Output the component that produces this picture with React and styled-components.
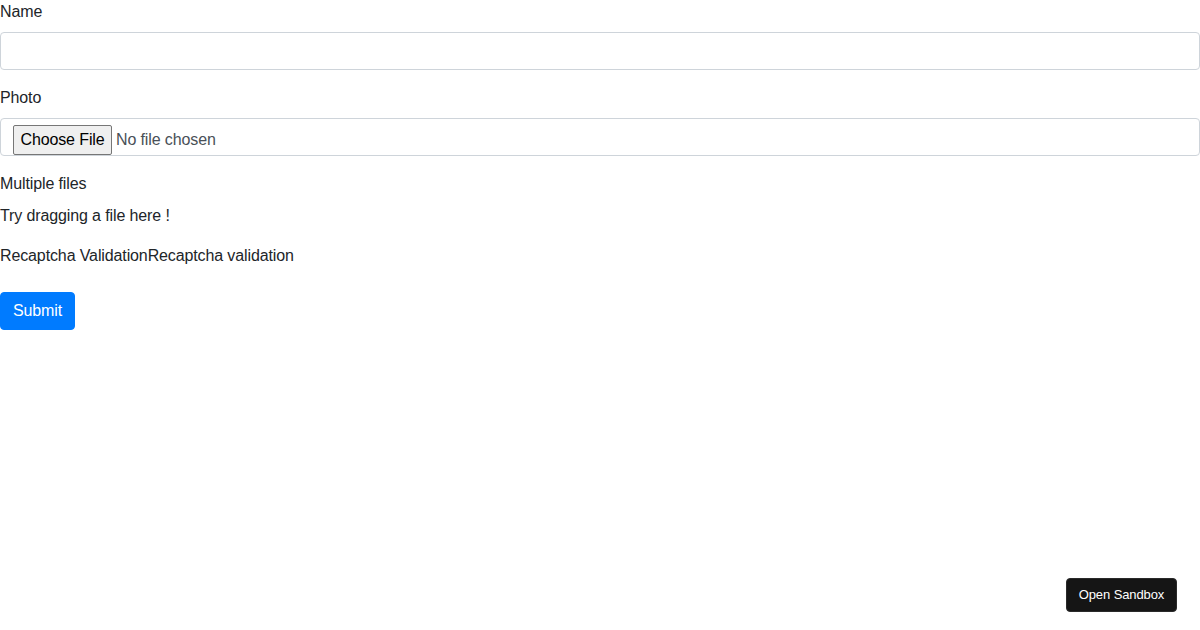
import React from 'react';
import styled, { createGlobalStyle } from 'styled-components';

const GlobalStyles = createGlobalStyle`
	* {
		box-sizing: border-box;
	}
	body {
		margin: 0;
		font-family: "Liberation Sans", Arial, sans-serif;
		font-size: 16px;
		line-height: 1.5;
		letter-spacing: -0.12px;
		color: #212529;
		background: #fff;
	}
`;

export default function App() {
	return (
		<>
			<GlobalStyles />
			<FormUI onSubmit={ ( e ) => e.preventDefault() }>
				<GroupUI>
					<LabelUI htmlFor="name">Name</LabelUI>
					<InputUI id="name" type="text" />
				</GroupUI>
				<GroupUI>
					<LabelUI htmlFor="photo">Photo</LabelUI>
					<FileInputUI id="photo" type="file" />
				</GroupUI>
				<GroupUI>
					<LabelUI>Multiple files</LabelUI>
					<DropZoneUI>Try dragging a file here !</DropZoneUI>
				</GroupUI>
				<RecaptchaUI>
					<span>Recaptcha Validation</span>
					<span>Recaptcha validation</span>
				</RecaptchaUI>
				<SubmitUI type="submit">Submit</SubmitUI>
			</FormUI>
			<SandboxButtonUI type="button">Open Sandbox</SandboxButtonUI>
		</>
	);
}

const FormUI = styled.form`
	display: flex;
	flex-direction: column;
	align-items: stretch;
	width: 100%;
`;

const GroupUI = styled.div`
	display: flex;
	flex-direction: column;
	margin-bottom: 16px;
`;

const LabelUI = styled.label`
	display: block;
	margin-bottom: 8px;
	height: 24px;
`;

const InputUI = styled.input`
	display: block;
	width: 100%;
	height: 38px;
	padding: 6px 12px;
	font-family: inherit;
	font-size: 16px;
	line-height: 1.5;
	letter-spacing: inherit;
	color: #495057;
	background: #fff;
	border: 1px solid #ced4da;
	border-radius: 4px;
	outline: none;
`;

const FileInputUI = styled( InputUI )`
	display: flex;
	align-items: flex-start;
	overflow: visible;

	&::file-selector-button {
		width: 99px;
		height: 30px;
		margin: 0 4px 0 0;
		padding: 1px 6px;
		font-family: "Liberation Sans", Arial, sans-serif;
		font-size: 16px;
		letter-spacing: -0.12px;
		color: #000;
		background: #efefef;
		border: 1px solid #767676;
		border-radius: 2px;
	}
`;

const DropZoneUI = styled.div`
	height: 24px;
`;

const RecaptchaUI = styled.div`
	display: flex;
	margin-bottom: 24px;
`;

const SubmitUI = styled.button`
	align-self: flex-start;
	height: 38px;
	padding: 6px 12px;
	font-family: inherit;
	font-size: 16px;
	line-height: 1.5;
	letter-spacing: inherit;
	color: #fff;
	background: #007bff;
	border: 1px solid #007bff;
	border-radius: 4px;
	cursor: pointer;
`;

const SandboxButtonUI = styled.button`
	position: fixed;
	right: 23px;
	bottom: 18px;
	width: 111px;
	height: 34px;
	padding: 0 0 2px;
	font-family: "Liberation Sans", Arial, sans-serif;
	font-size: 13px;
	line-height: 1;
	letter-spacing: -0.1px;
	color: #fff;
	background: #151515;
	border: 1px solid #2a2a2a;
	border-radius: 4px;
	cursor: pointer;
`;
